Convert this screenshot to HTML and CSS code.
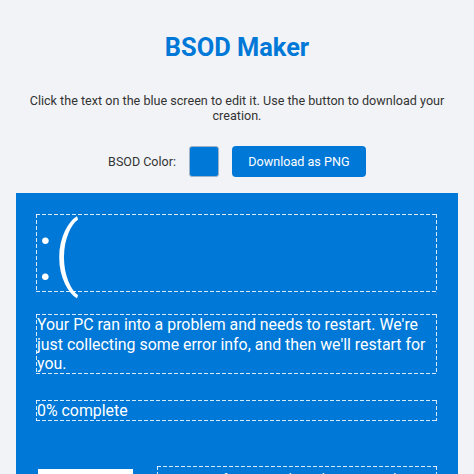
FILE: index.html
```html
<!DOCTYPE html>
<html lang="en">
<head>
<meta charset="utf-8">
<title>BSOD Maker</title>
<link rel="stylesheet" href="styles.css">
</head>
<body>
<div class="app">
  <h1 class="title">BSOD Maker</h1>
  <p class="intro">Click the text on the blue screen to edit it. Use the button to download your creation.</p>
  <div class="controls">
    <label class="color-label">BSOD Color:</label>
    <span class="swatch"></span>
    <button class="download">Download as PNG</button>
  </div>
  <div class="bsod">
    <div class="editable face">:(</div>
    <div class="editable message">Your PC ran into a problem and needs to restart. We're just collecting some error info, and then we'll restart for you.</div>
    <div class="editable progress">0% complete</div>
    <div class="bottom">
      <div class="qr"></div>
      <div class="editable info">For more information about this issue and possible fixes, visit https://www.windows.com/stopcode</div>
    </div>
  </div>
</div>
</body>
</html>
```
FILE: styles.css
```css
html, body {
  margin: 0;
  padding: 0;
}
body {
  background: #f2f3f7;
  font-family: Roboto, "Liberation Sans", Arial, sans-serif;
  color: #333;
}
.app {
  padding: 32px 16px 0;
}
.title {
  margin: 0;
  font-size: 25.4px;
  line-height: 30px;
  font-weight: 700;
  text-align: center;
  color: #0078d7;
}
.intro {
  margin: 31px 0 0;
  font-size: 12.6px;
  line-height: 15.2px;
  text-align: center;
  color: #333;
}
.controls {
  margin-top: 23px;
  display: flex;
  justify-content: center;
  align-items: center;
  gap: 13px;
}
.color-label {
  font-size: 12.5px;
  color: #333;
}
.swatch {
  display: block;
  width: 28px;
  height: 29px;
  background: #0078d7;
  border: 1px solid #9fb3c8;
  border-radius: 3px;
}
.download {
  font-family: inherit;
  font-size: 12.6px;
  color: #fff;
  background: #0078d7;
  border: none;
  border-radius: 4px;
  width: 134px;
  height: 31px;
  padding: 0;
}
.bsod {
  margin-top: 16px;
  background: #0078d7;
  color: #fff;
  padding: 21px 21px 40px 20px;
}
.editable {
  --dash: rgba(255, 255, 255, 0.85);
  padding: 1px;
  background:
    repeating-linear-gradient(90deg, var(--dash) 0 4px, transparent 4px 6px) left top / 100% 1px no-repeat,
    repeating-linear-gradient(90deg, var(--dash) 0 4px, transparent 4px 6px) left bottom / 100% 1px no-repeat,
    repeating-linear-gradient(180deg, var(--dash) 0 4px, transparent 4px 6px) left top / 1px 100% no-repeat,
    repeating-linear-gradient(180deg, var(--dash) 0 4px, transparent 4px 6px) right top / 1px 100% no-repeat;
}
.face {
  font-size: 80px;
  font-weight: 300;
  line-height: 76px;
  height: 76px;
  margin-bottom: 22px;
}
.message {
  font-size: 15.9px;
  line-height: 19.2px;
  margin-bottom: 26px;
}
.progress {
  font-size: 15.9px;
  line-height: 19.2px;
  margin-bottom: 45px;
}
.bottom {
  display: flex;
  align-items: flex-start;
  gap: 24px;
}
.qr {
  flex: none;
  width: 95px;
  height: 95px;
  background: #fff;
  margin: 3px 0 0 2px;
}
.info {
  flex: 1;
  font-size: 12.8px;
  line-height: 16px;
  padding-top: 5px;
}
```
